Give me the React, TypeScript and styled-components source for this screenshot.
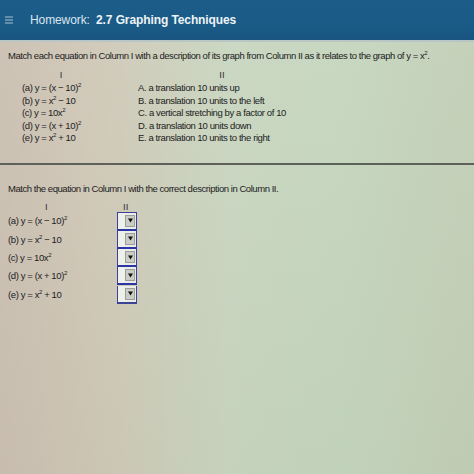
import type { FC } from 'react'
import styled, { createGlobalStyle } from 'styled-components'

const GlobalStyle = createGlobalStyle`
  html, body {
    margin: 0;
    padding: 0;
  }
  body {
    font-family: "Liberation Sans", Arial, sans-serif;
    color: #2b2b2b;
  }
`

const Sup: FC<{ children: string }> = ({ children }) => <SupText>{children}</SupText>

const columnOne = [
  <>(a) y = (x − 10)<Sup>2</Sup></>,
  <>(b) y = x<Sup>2</Sup> − 10</>,
  <>(c) y = 10x<Sup>2</Sup></>,
  <>(d) y = (x + 10)<Sup>2</Sup></>,
  <>(e) y = x<Sup>2</Sup> + 10</>,
]

const columnTwo = [
  'A. a translation 10 units up',
  'B. a translation 10 units to the left',
  'C. a vertical stretching by a factor of 10',
  'D. a translation 10 units down',
  'E. a translation 10 units to the right',
]

const App: FC = () => {
  return (
    <Page>
      <GlobalStyle />
      <Header>
        <MenuIcon viewBox="0 0 8 8">
          <rect x="0" y="0.5" width="8" height="1" />
          <rect x="0" y="3.5" width="8" height="1" />
          <rect x="0" y="6.5" width="8" height="1" />
        </MenuIcon>
        <Title>
          Homework: <strong>2.7 Graphing Techniques</strong>
        </Title>
      </Header>

      <Section>
        <Prompt>
          Match each equation in Column I with a description of its graph from Column II as it relates to the graph of y = x<Sup>2</Sup>.
        </Prompt>
        <MatchTable>
          <ColHead>I</ColHead>
          <ColHead>II</ColHead>
          <Column>
            {columnOne.map((eq, i) => <Line key={i}>{eq}</Line>)}
          </Column>
          <Column>
            {columnTwo.map((d) => <Line key={d}>{d}</Line>)}
          </Column>
        </MatchTable>
      </Section>

      <Divider />

      <Section>
        <Prompt>Match the equation in Column I with the correct description in Column II.</Prompt>
        <AnswerTable>
          <AnswerHead $offset={37}>I</AnswerHead>
          <AnswerHead $offset={6}>II</AnswerHead>
          {columnOne.map((eq, i) => (
            <AnswerRow key={i}>
              <AnswerEq>{eq}</AnswerEq>
              <Select $first={i === 0} $last={i === columnOne.length - 1}>
                <SelectField />
                <SelectButton>
                  <svg width="5" height="5" viewBox="0 0 5 5">
                    <polygon points="0,0.5 5,0.5 2.5,4.5" fill="#111" />
                  </svg>
                </SelectButton>
              </Select>
            </AnswerRow>
          ))}
        </AnswerTable>
      </Section>
    </Page>
  )
}

const Page = styled.div`
  min-height: 474px;
  width: 474px;
  overflow: hidden;
  background:
    linear-gradient(180deg, rgba(255,255,255,0.05) 0%, rgba(0,0,0,0.02) 100%),
    linear-gradient(90deg, #cbc0b2 0%, #d0c8b7 20%, #c9d6c0 48%, #c5d6be 72%, #c3cfb7 100%);
`

const Header = styled.header`
  height: 40px;
  display: flex;
  align-items: center;
  gap: 17px;
  padding-left: 5px;
  background: linear-gradient(180deg, #1c5c88 0%, #1a5b87 60%, #195580 100%);
  border-bottom: 2px solid #b9c6c6;
`

const MenuIcon = styled.svg`
  width: 8px;
  height: 8px;
  fill: #a9bfcf;
`

const Title = styled.div`
  font-size: 12px;
  color: #dbe6ee;
  letter-spacing: -0.1px;
  strong {
    margin-left: 3px;
    font-weight: 700;
    color: #eef3f6;
  }
`

const Section = styled.section`
  padding: 8px 0 0 8px;
`

const Prompt = styled.p`
  margin: 0;
  font-size: 9.5px;
  line-height: 12px;
  letter-spacing: -0.45px;
  white-space: nowrap;
  color: #222;
`

const SupText = styled.sup`
  font-size: 6px;
  line-height: 0;
  vertical-align: 4px;
`

const MatchTable = styled.div`
  display: grid;
  grid-template-columns: 78px 168px;
  column-gap: 38px;
  padding: 6px 0 0 14px;
`

const ColHead = styled.div`
  text-align: center;
  font-size: 9.5px;
  line-height: 14px;
  color: #333;
`

const Column = styled.div`
  display: flex;
  flex-direction: column;
  white-space: nowrap;
`

const Line = styled.div`
  font-size: 9.5px;
  line-height: 12.6px;
  letter-spacing: -0.4px;
  color: #222;
`

const Divider = styled.hr`
  margin: 18px 0 10px;
  border: none;
  height: 2px;
  background: #5e605a;
`

const AnswerTable = styled.div`
  display: grid;
  grid-template-columns: 109px 20px;
  padding-top: 7px;
`

const AnswerHead = styled.div<{ $offset: number }>`
  padding-left: ${(p) => p.$offset}px;
  font-size: 9.5px;
  line-height: 10px;
  color: #333;
`

const AnswerRow = styled.div`
  display: contents;
`

const AnswerEq = styled.div`
  font-size: 9.5px;
  line-height: 18.2px;
  letter-spacing: -0.4px;
  white-space: nowrap;
  color: #222;
`

const Select = styled.div<{ $first: boolean; $last: boolean }>`
  display: flex;
  height: 16px;
  border: 1px solid #3d4296;
  border-top: ${(p) => (p.$first ? '1px solid #3d4296' : 'none')};
  border-bottom: 2px solid ${(p) => (p.$last ? '#3d4296' : '#2b36a6')};
  background: #e9ece8;
`

const SelectField = styled.div`
  flex: 1;
  background: #eef0ec;
`

const SelectButton = styled.div`
  width: 8px;
  margin: 2px 1px 2px 0;
  display: flex;
  align-items: center;
  justify-content: center;
  background: #c9cdc6;
  border: 1px solid #9aa099;
`

export default App
